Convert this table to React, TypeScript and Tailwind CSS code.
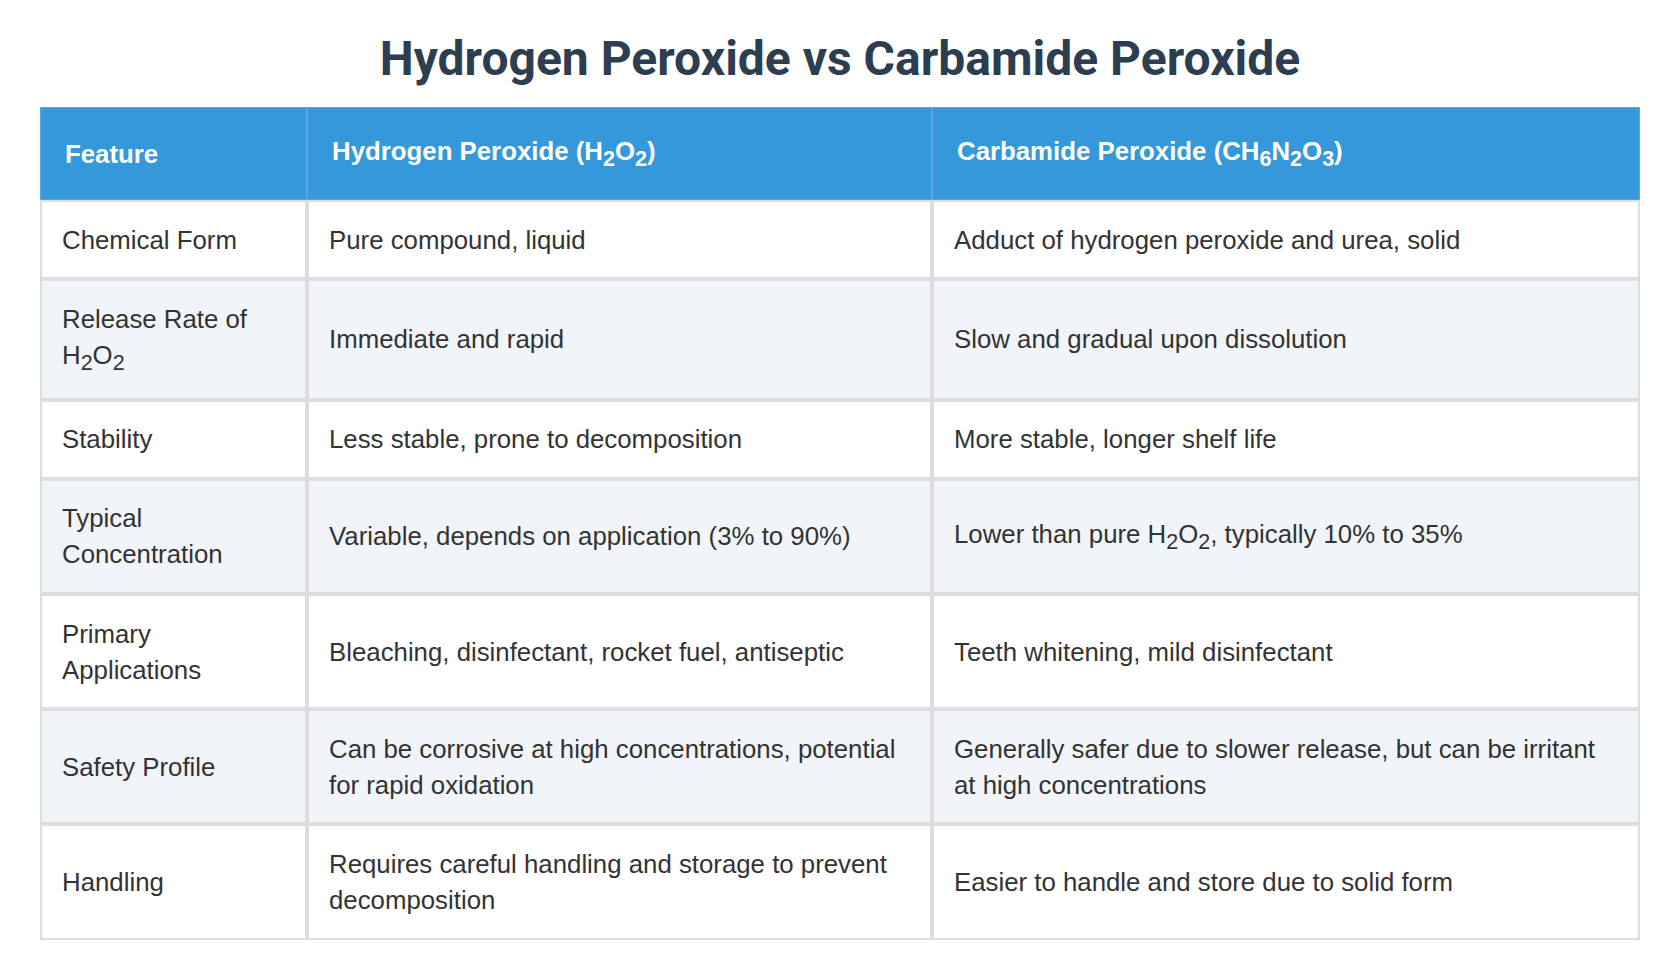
import React from "react";

type Row = {
  feature: React.ReactNode;
  hp: React.ReactNode;
  cp: React.ReactNode;
};

function Sub({ children }: { children: React.ReactNode }) {
  return <sub className="static align-sub [font-size:smaller] leading-[1.4]">{children}</sub>;
}

const rows: Row[] = [
  {
    feature: "Chemical Form",
    hp: "Pure compound, liquid",
    cp: "Adduct of hydrogen peroxide and urea, solid",
  },
  {
    feature: (
      <>
        Release Rate of H<Sub>2</Sub>O<Sub>2</Sub>
      </>
    ),
    hp: "Immediate and rapid",
    cp: "Slow and gradual upon dissolution",
  },
  {
    feature: "Stability",
    hp: "Less stable, prone to decomposition",
    cp: "More stable, longer shelf life",
  },
  {
    feature: "Typical Concentration",
    hp: "Variable, depends on application (3% to 90%)",
    cp: (
      <>
        Lower than pure H<Sub>2</Sub>O<Sub>2</Sub>, typically 10% to 35%
      </>
    ),
  },
  {
    feature: "Primary Applications",
    hp: "Bleaching, disinfectant, rocket fuel, antiseptic",
    cp: "Teeth whitening, mild disinfectant",
  },
  {
    feature: "Safety Profile",
    hp: "Can be corrosive at high concentrations, potential for rapid oxidation",
    cp: "Generally safer due to slower release, but can be irritant at high concentrations",
  },
  {
    feature: "Handling",
    hp: "Requires careful handling and storage to prevent decomposition",
    cp: "Easier to handle and store due to solid form",
  },
];

export default function App() {
  return (
    <div className="min-h-screen bg-white px-[40px] pt-[31px] pb-[40px] font-['Liberation_Sans',Arial,sans-serif] text-[#333333]">
      <h1 className="mb-[20px] text-center font-['Roboto',sans-serif] text-[48px] font-bold leading-[56px] text-[#2c3e50]">
        Hydrogen Peroxide vs Carbamide Peroxide
      </h1>

      <table className="w-full table-fixed border-separate border-spacing-0 text-[25.8px] leading-[1.4]">
        <thead>
          <tr className="bg-[#3498db] text-white">
            <th className="w-[267px] border border-[#5aa7dd] px-[24px] py-[25px] text-left align-middle font-bold">
              Feature
            </th>
            <th className="w-[625px] border border-[#5aa7dd] px-[24px] py-[25px] text-left align-middle font-bold">
              Hydrogen Peroxide (H<Sub>2</Sub>O<Sub>2</Sub>)
            </th>
            <th className="border border-[#5aa7dd] px-[24px] py-[25px] text-left align-middle font-bold">
              Carbamide Peroxide (CH<Sub>6</Sub>N<Sub>2</Sub>O<Sub>3</Sub>)
            </th>
          </tr>
        </thead>
        <tbody>
          {rows.map((r, i) => (
            <tr key={i} className={i % 2 === 1 ? "bg-[#f1f5f9]" : "bg-white"}>
              <td className="border-2 border-[#dddddd] px-[20px] py-[19.5px] align-middle">{r.feature}</td>
              <td className="border-2 border-[#dddddd] px-[20px] py-[19.5px] align-middle">{r.hp}</td>
              <td className="border-2 border-[#dddddd] px-[20px] py-[19.5px] align-middle">{r.cp}</td>
            </tr>
          ))}
        </tbody>
      </table>
    </div>
  );
}
